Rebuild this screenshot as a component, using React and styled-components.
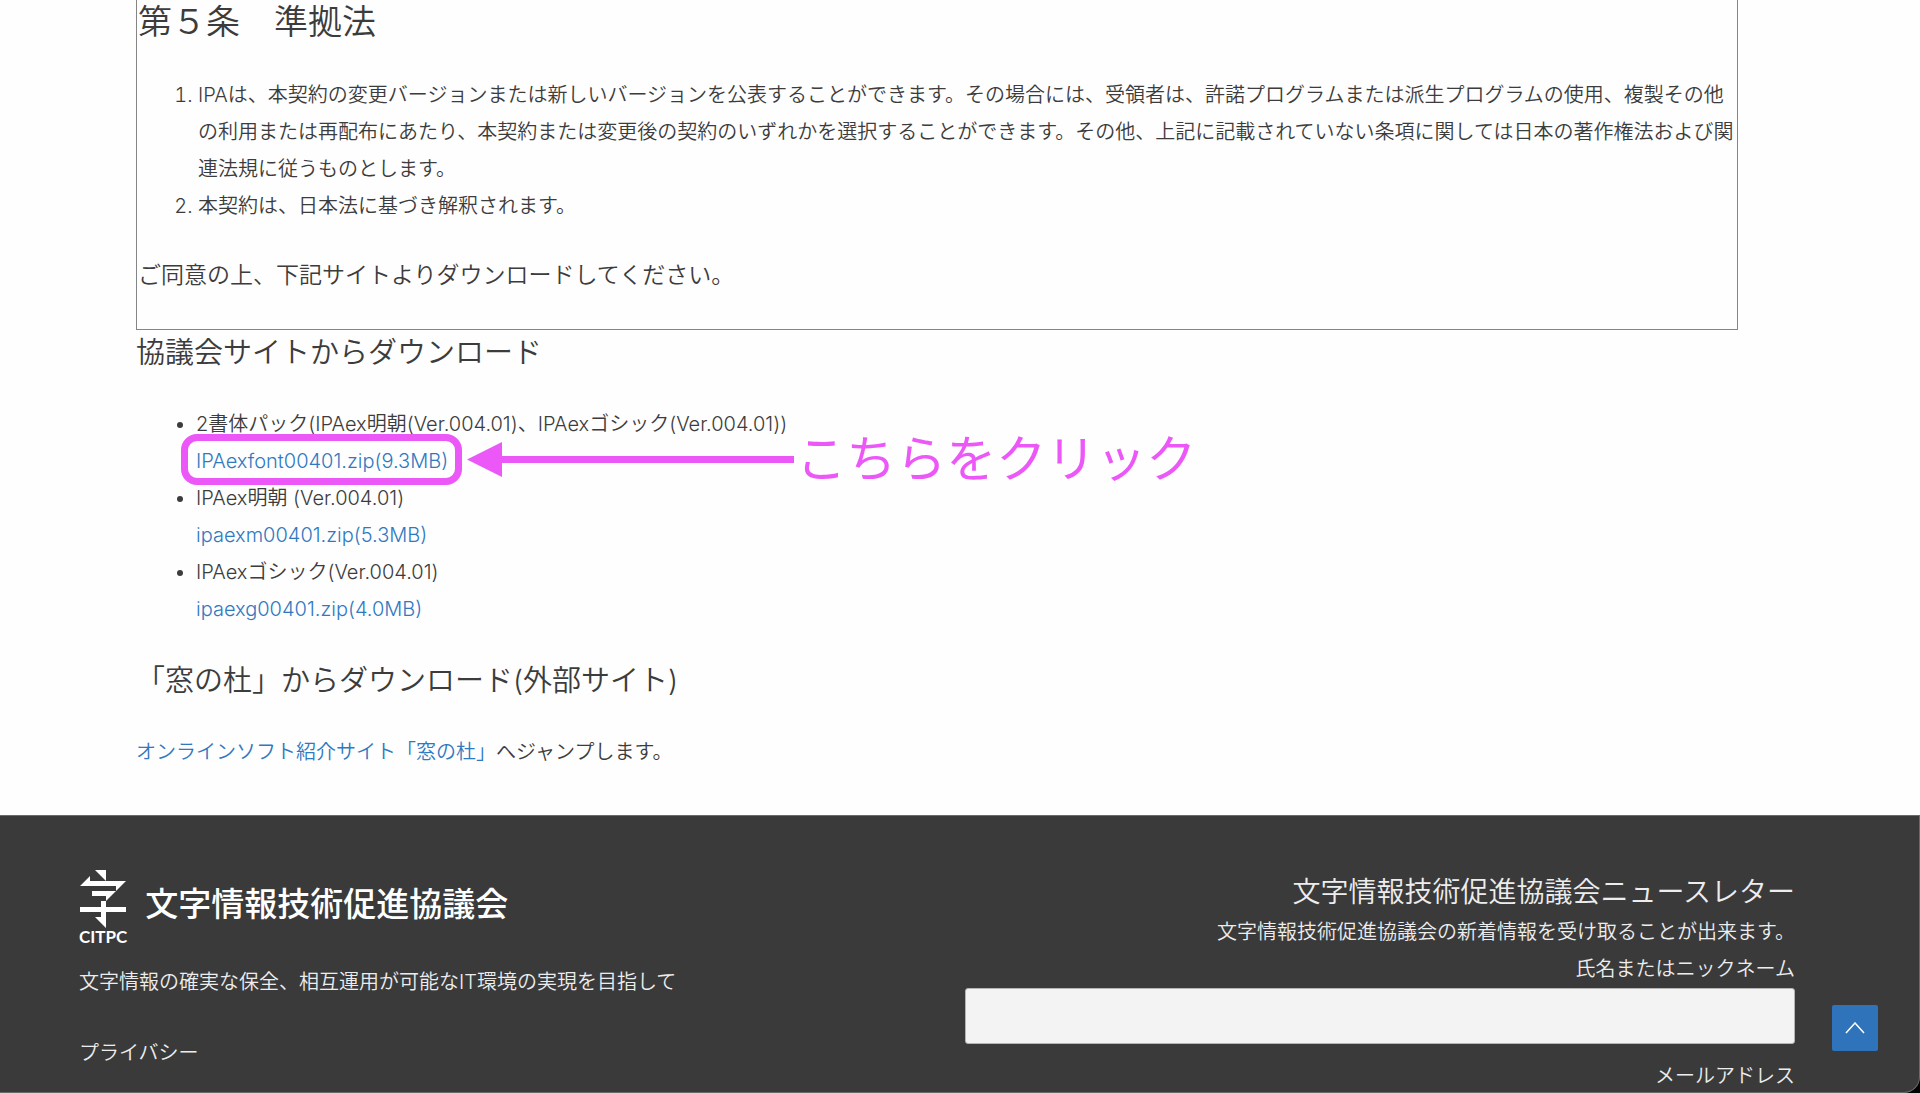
import styled, { createGlobalStyle } from "styled-components";

const GlobalStyle = createGlobalStyle`
  * {
    box-sizing: border-box;
  }

  body {
    margin: 0;
    background: #000;
    color: #3c3c3c;
    font-family: Inter, "Noto Sans CJK JP", sans-serif;
    font-size: 20px;
    font-weight: 350;
    line-height: 37px;
  }
`;

const downloads = [
  {
    title: "2書体パック(IPAex明朝(Ver.004.01)、IPAexゴシック(Ver.004.01))",
    file: "IPAexfont00401.zip(9.3MB)",
    marked: true,
  },
  { title: "IPAex明朝 (Ver.004.01)", file: "ipaexm00401.zip(5.3MB)" },
  { title: "IPAexゴシック(Ver.004.01)", file: "ipaexg00401.zip(4.0MB)" },
];

function Logo() {
  return (
    <LogoLink href="#top">
      <LogoMark>
        <svg width="46" height="58" viewBox="0 0 46 58" fill="#fff">
          <path d="M15 0H26V11Z" />
          <path d="M0 16L10 6V11H46L26 31V37H46V42H26V58L15 47H21V42H0V37H21V31H26V26H12V21H36V16Z" />
        </svg>
        <span>CITPC</span>
      </LogoMark>
      <LogoName>文字情報技術促進協議会</LogoName>
    </LogoLink>
  );
}

export default function App() {
  return (
    <Page>
      <GlobalStyle />
      <Main>
        <Agreement>
          <ArticleTitle>第５条　準拠法</ArticleTitle>
          <Terms>
            <li>
              IPAは、本契約の変更バージョンまたは新しいバージョンを公表することができます。その場合には、受領者は、許諾プログラムまたは派生プログラムの使用、複製その他の利用または再配布にあたり、本契約または変更後の契約のいずれかを選択することができます。その他、上記に記載されていない条項に関しては日本の著作権法および関連法規に従うものとします。
            </li>
            <li>本契約は、日本法に基づき解釈されます。</li>
          </Terms>
          <Consent>ご同意の上、下記サイトよりダウンロードしてください。</Consent>
        </Agreement>

        <SectionTitle>協議会サイトからダウンロード</SectionTitle>
        <FileList>
          {downloads.map((item) => (
            <li key={item.file}>
              {item.title}
              <FileRow>
                <TextLink href="#download">{item.file}</TextLink>
                {item.marked && (
                  <>
                    <Marker />
                    <Callout>
                      <svg width="327" height="35" viewBox="0 0 327 35" fill="#ec57f8">
                        <path d="M0 17.5L35 0V14H327V21H35V35Z" />
                      </svg>
                      こちらをクリック
                    </Callout>
                  </>
                )}
              </FileRow>
            </li>
          ))}
        </FileList>

        <SectionTitle>「窓の杜」からダウンロード(外部サイト)</SectionTitle>
        <Jump>
          <TextLink href="#madonomori">オンラインソフト紹介サイト「窓の杜」</TextLink>
          へジャンプします。
        </Jump>
      </Main>

      <Footer>
        <About>
          <Logo />
          <p>文字情報の確実な保全、相互運用が可能なIT環境の実現を目指して</p>
          <FooterLink href="#privacy">プライバシー</FooterLink>
        </About>
        <Newsletter>
          <h2>文字情報技術促進協議会ニュースレター</h2>
          <p>文字情報技術促進協議会の新着情報を受け取ることが出来ます。</p>
          <label htmlFor="nickname">氏名またはニックネーム</label>
          <input id="nickname" type="text" />
          <label htmlFor="email">メールアドレス</label>
          <input id="email" type="email" />
        </Newsletter>
      </Footer>

      <TopButton type="button" aria-label="ページの先頭へ">
        <svg width="20" height="12" viewBox="0 0 20 12" fill="none" stroke="#fff" strokeWidth="1.5">
          <path d="M1 11L10 1L19 11" />
        </svg>
      </TopButton>
    </Page>
  );
}

const Page = styled.div`
  display: flex;
  flex-direction: column;
  height: 100vh;
  overflow: hidden;
`;

const Main = styled.main`
  flex-shrink: 0;
  padding: 0 182px 44px 136px;
  background: #fefefe;
`;

const Agreement = styled.section`
  border: 1px solid #858585;
  border-top: none;
  padding: 0 1px 35px;
`;

const ArticleTitle = styled.h2`
  margin: 0;
  font-size: 34px;
  font-weight: 350;
  line-height: 44px;
`;

const Terms = styled.ol`
  margin: 33px 0 32px;
  padding-left: 60px;
`;

const Consent = styled.p`
  margin: 0;
  font-size: 23px;
`;

const SectionTitle = styled.h3`
  margin: 0;
  font-size: 29px;
  font-weight: 350;
  line-height: 46px;
`;

const FileList = styled.ul`
  margin: 30px 0;
  padding-left: 60px;
`;

const FileRow = styled.div`
  position: relative;
  width: max-content;
`;

const TextLink = styled.a`
  color: #3079c1;
  text-decoration: none;
`;

/* pink frame drawn around the file to click */
const Marker = styled.div`
  position: absolute;
  inset: -9px -14px -5px -15px;
  border: 7px solid #ec57f8;
  border-radius: 16px;
  pointer-events: none;
`;

const Callout = styled.div`
  position: absolute;
  top: -2px;
  left: 100%;
  display: flex;
  align-items: center;
  gap: 2px;
  height: 37px;
  margin-left: 19px;
  color: #ec57f8;
  font-size: 50px;
  font-weight: 400;
  white-space: nowrap;
`;

const Jump = styled.p`
  margin: 30px 0 0;
`;

const Footer = styled.footer`
  flex: 1;
  display: flex;
  justify-content: space-between;
  gap: 80px;
  min-height: 0;
  overflow: hidden;
  padding: 54px 124px 0 79px;
  border: 1px solid #6a6a6a;
  border-left: none;
  border-radius: 0 0 16px 0;
  background: #3a3a3a;
  color: #ededed;
`;

const About = styled.div`
  p {
    margin: 18px 0 34px;
  }
`;

const LogoLink = styled.a`
  display: flex;
  align-items: center;
  gap: 18px;
  color: #fff;
  text-decoration: none;
`;

const LogoName = styled.span`
  padding-bottom: 8px;
  font-size: 33px;
  font-weight: 500;
`;

const LogoMark = styled.span`
  display: flex;
  flex-direction: column;
  align-items: center;
  font-family: Lato, sans-serif;
  font-size: 17px;
  font-weight: 700;
  line-height: 18px;
`;

const FooterLink = styled.a`
  color: inherit;
  text-decoration: none;
`;

const Newsletter = styled.form`
  flex: 0 1 830px;
  display: flex;
  flex-direction: column;
  text-align: right;

  h2 {
    margin: 0;
    font-size: 28px;
    font-weight: 350;
    line-height: 44px;
  }

  p {
    margin: 0;
  }

  input {
    flex-shrink: 0;
    height: 56px;
    margin-bottom: 14px;
    padding: 0 12px;
    border: 1px solid #b4b4b4;
    border-radius: 3px;
    background: #f3f3f3;
    font: inherit;
  }
`;

const TopButton = styled.button`
  position: fixed;
  right: 42px;
  bottom: 42px;
  display: flex;
  align-items: center;
  justify-content: center;
  width: 46px;
  height: 46px;
  padding: 0;
  border: none;
  border-radius: 2px;
  background: #2f73ba;
  cursor: pointer;
`;
